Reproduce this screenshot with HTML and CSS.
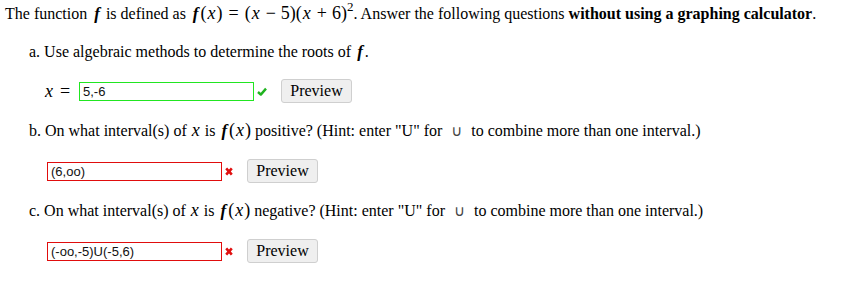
FILE: index.html
```html
<!DOCTYPE html>
<html>
<head>
<meta charset="utf-8">
<link rel="stylesheet" href="styles.css">
</head>
<body>
<div class="page">
  <p class="intro">The function <span class="m"><span class="mv fv">f</span></span> is defined as <span class="m"><span class="mv fv">f</span>(<span class="mv">x</span>)<span class="rel">=</span>(<span class="mv">x</span><span class="bin">−</span>5)(<span class="mv">x</span><span class="bin">+</span>6)<sup class="sup">2</sup></span>. Answer the following questions <b>without using a graphing calculator</b>.</p>

  <p class="q">a. Use algebraic methods to determine the roots of <span class="m"><span class="mv fv">f</span></span>.</p>
  <div class="row row-a">
    <span class="m lbl"><span class="mv">x</span><span class="rel">=</span></span>
    <span class="ans ok">5,-6</span>
    <svg class="mark" width="10" height="9" viewBox="0 0 10 9"><path d="M1 5 L3.8 7.6 L9 1.6" fill="none" stroke="#1fb31f" stroke-width="2.4" stroke-linejoin="round"/></svg>
    <span class="btn">Preview</span>
  </div>

  <p class="q">b. On what interval(s) of <span class="m"><span class="mv">x</span></span> is <span class="m"><span class="mv fv">f</span>(<span class="mv">x</span>)</span> positive? (Hint: enter "U" for <span class="cup">∪</span> to combine more than one interval.)</p>
  <div class="row row-b">
    <span class="ans bad">(6,oo)</span>
    <svg class="mark" width="8" height="9" viewBox="0 0 8 9"><path d="M1.2 1.4 L6.8 7.6 M6.8 1.4 L1.2 7.6" fill="none" stroke="#e01010" stroke-width="2.6"/></svg>
    <span class="btn">Preview</span>
  </div>

  <p class="q">c. On what interval(s) of <span class="m"><span class="mv">x</span></span> is <span class="m"><span class="mv fv">f</span>(<span class="mv">x</span>)</span> negative? (Hint: enter "U" for <span class="cup">∪</span> to combine more than one interval.)</p>
  <div class="row row-b">
    <span class="ans bad">(-oo,-5)U(-5,6)</span>
    <svg class="mark" width="8" height="9" viewBox="0 0 8 9"><path d="M1.2 1.4 L6.8 7.6 M6.8 1.4 L1.2 7.6" fill="none" stroke="#e01010" stroke-width="2.6"/></svg>
    <span class="btn">Preview</span>
  </div>
</div>
</body>
</html>
```

FILE: styles.css
```css
html, body {
  margin: 0;
  padding: 0;
  background: #fff;
}
.page {
  padding: 3px 0 0 5px;
  font-family: "Liberation Serif", "Times New Roman", serif;
  font-size: 16px;
  color: #000;
}
p {
  margin: 0;
  line-height: 20px;
  height: 20px;
  white-space: nowrap;
}
.intro {
  margin-bottom: 18px;
}
.q {
  margin-left: 24px;
}
.m {
  font-family: "Liberation Serif", "Times New Roman", serif;
  font-size: 18px;
  white-space: nowrap;
}
.mv {
  font-family: "Liberation Serif", "Times New Roman", serif;
  font-style: italic;
  padding: 0 1px;
}
.fv {
  padding: 0 2px 0 2px;
  font-weight: bold;
  font-size: 17px;
}
.intro .fv {
  padding-left: 3px;
}
.rel {
  padding: 0 6px;
}
.bin {
  padding: 0 5px;
}
.sup {
  font-size: 13px;
  vertical-align: 8px;
  line-height: 0;
}
.cup {
  color: #444;
  font-family: "DejaVu Sans", sans-serif;
  font-size: 15px;
  padding: 0 5px 0 5px;
}
.row {
  display: flex;
  align-items: center;
  height: 24px;
  margin-top: 19px;
  margin-bottom: 17px;
}
.row-a {
  margin-top: 18px;
  padding-left: 39px;
}
.row-b {
  padding-left: 42px;
}
.lbl {
  width: 35px;
  white-space: nowrap;
}
.ans {
  box-sizing: border-box;
  width: 175px;
  height: 19px;
  line-height: 17px;
  padding: 0 3px;
  font-family: "Liberation Sans", Arial, sans-serif;
  font-size: 13px;
  color: #111;
  background: #fff;
}
.ok {
  border: 1px solid #21e621;
}
.bad {
  border: 1px solid #e00d0d;
}
.mark {
  margin-left: 3px;
  margin-right: 14px;
}
.btn {
  box-sizing: border-box;
  display: inline-block;
  width: 71px;
  height: 24px;
  line-height: 22px;
  text-align: center;
  border: 1px solid #cfcfcf;
  border-radius: 3px;
  background: #efefef;
  font-family: "Liberation Serif", "Times New Roman", serif;
  font-size: 16px;
}
```
